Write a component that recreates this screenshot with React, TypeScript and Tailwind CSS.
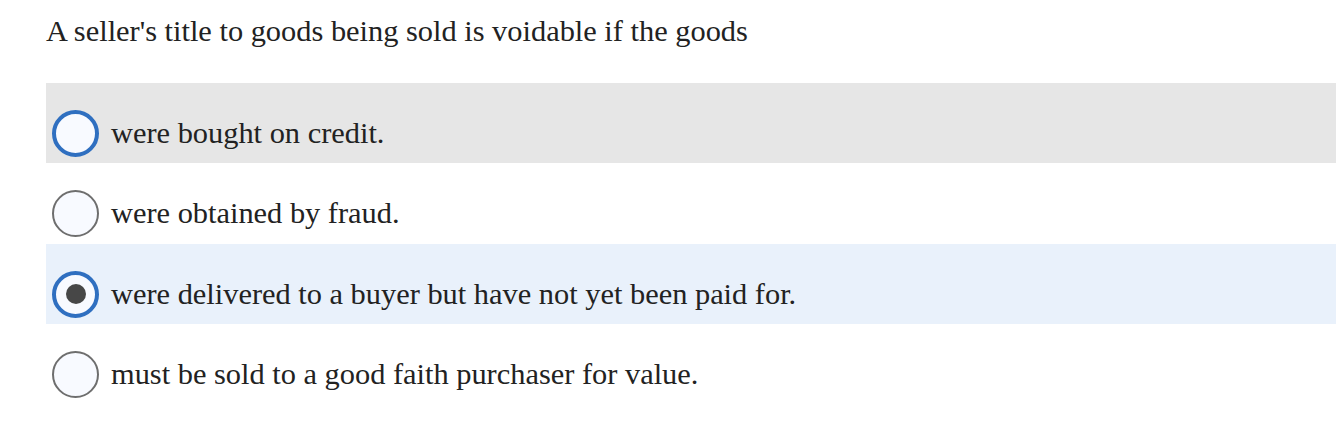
import React, { useState } from 'react';

const options = [
  'were bought on credit.',
  'were obtained by fraud.',
  'were delivered to a buyer but have not yet been paid for.',
  'must be sold to a good faith purchaser for value.',
];

export default function App() {
  const [selected, setSelected] = useState(2);
  const focused = 0;

  return (
    <div className="min-h-[446px] bg-white pl-[46px] text-[#222] font-['Liberation_Serif','Times_New_Roman',serif]">
      <p className="pt-[13px] text-[30.4px] leading-[36px]">
        A seller's title to goods being sold is voidable if the goods
      </p>

      <div className="mt-[34px]">
        {options.map((text, i) => {
          const isSel = selected === i;
          const isFocus = focused === i;
          const rowBg = isSel ? 'bg-[#e9f1fb]' : isFocus ? 'bg-[#e6e6e6]' : 'bg-white';
          const ring = isSel || isFocus ? 'border-[4px] border-[#2f6fc0]' : 'border-2 border-[#6e6e6e]';
          return (
            <label
              key={i}
              onClick={() => setSelected(i)}
              className={`flex h-[80.4px] cursor-pointer items-start gap-[12px] pl-[6px] pt-[27px] ${rowBg}`}
            >
              <span className={`flex h-[47px] w-[47px] shrink-0 items-center justify-center rounded-full bg-[#f8faff] ${ring}`}>
                {isSel && <span className="h-[20px] w-[20px] rounded-full bg-[#474747]" />}
              </span>
              <span className="text-[30.4px] leading-[47px]">{text}</span>
            </label>
          );
        })}
      </div>
    </div>
  );
}
